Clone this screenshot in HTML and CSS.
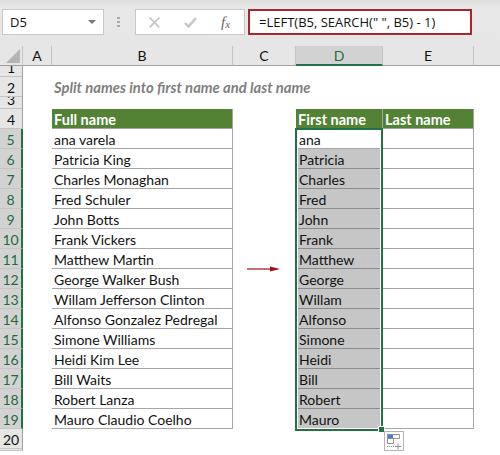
FILE: index.html
```html
<!DOCTYPE html>
<html lang="en">
<head>
    <meta charset="UTF-8">
    <title>Split names</title>
    <link rel="stylesheet" href="styles.css">
</head>
<body>
    <div class="formula-bar">
        <div class="name-box">
            <span>D5</span>
            <span class="name-arrow"></span>
        </div>
        <div class="grip"></div>
        <div class="fx-box">
            <svg class="fx-icon" width="11" height="11" viewBox="0 0 11 11"><path d="M.7.7l9.600 9.600M10.300.7L.7 10.300" stroke="#c6c6c6" stroke-width="1.800" fill="none"/></svg>
            <svg class="fx-icon" width="13" height="11" viewBox="0 0 13 11"><path d="M1 6l3.500 3.500L12 1" stroke="#c6c6c6" stroke-width="2.400" fill="none"/></svg>
            <span class="fx-text">f<sub>x</sub></span>
        </div>
        <div class="formula-input">=LEFT(B5, SEARCH(" ", B5) - 1)</div>
    </div>

    <div class="sheet">
        <div class="col-head corner"><svg width="14" height="14" viewBox="0 0 14 14"><path d="M14 0v14H0z" fill="#b4b4b4"/></svg></div>
        <div class="col-head">A</div>
        <div class="col-head">B</div>
        <div class="col-head">C</div>
        <div class="col-head active">D</div>
        <div class="col-head">E</div>
        <div class="col-head last"></div>

        <div class="row-head clip">1</div><div class="blank wide"></div>
        <div class="row-head">2</div><div class="blank"></div><div class="title">Split names into first name and last name</div>
        <div class="row-head clip">3</div><div class="blank wide"></div>

        <div class="row-head">4</div><div class="blank"></div>
        <div class="cell head">Full name</div><div class="blank"></div>
        <div class="cell head">First name</div><div class="cell head">Last name</div><div class="blank"></div>

        <div class="row-head sel">5</div><div class="blank"></div>
        <div class="cell">ana varela</div><div class="blank"></div>
        <div class="cell first">ana</div><div class="cell"></div><div class="blank"></div>

        <div class="row-head sel">6</div><div class="blank"></div>
        <div class="cell">Patricia King</div><div class="blank"></div>
        <div class="cell fill">Patricia</div><div class="cell"></div><div class="blank"></div>

        <div class="row-head sel">7</div><div class="blank"></div>
        <div class="cell">Charles Monaghan</div><div class="blank"></div>
        <div class="cell fill">Charles</div><div class="cell"></div><div class="blank"></div>

        <div class="row-head sel">8</div><div class="blank"></div>
        <div class="cell">Fred Schuler</div><div class="blank"></div>
        <div class="cell fill">Fred</div><div class="cell"></div><div class="blank"></div>

        <div class="row-head sel">9</div><div class="blank"></div>
        <div class="cell">John Botts</div><div class="blank"></div>
        <div class="cell fill">John</div><div class="cell"></div><div class="blank"></div>

        <div class="row-head sel">10</div><div class="blank"></div>
        <div class="cell">Frank Vickers</div><div class="blank"></div>
        <div class="cell fill">Frank</div><div class="cell"></div><div class="blank"></div>

        <div class="row-head sel">11</div><div class="blank"></div>
        <div class="cell">Matthew Martin</div><div class="blank"></div>
        <div class="cell fill">Matthew</div><div class="cell"></div><div class="blank"></div>

        <div class="row-head sel">12</div><div class="blank"></div>
        <div class="cell">George Walker Bush</div><div class="blank"></div>
        <div class="cell fill">George</div><div class="cell"></div><div class="blank"></div>

        <div class="row-head sel">13</div><div class="blank"></div>
        <div class="cell">Willam Jefferson Clinton</div><div class="blank"></div>
        <div class="cell fill">Willam</div><div class="cell"></div><div class="blank"></div>

        <div class="row-head sel">14</div><div class="blank"></div>
        <div class="cell">Alfonso Gonzalez Pedregal</div><div class="blank"></div>
        <div class="cell fill">Alfonso</div><div class="cell"></div><div class="blank"></div>

        <div class="row-head sel">15</div><div class="blank"></div>
        <div class="cell">Simone Williams</div><div class="blank"></div>
        <div class="cell fill">Simone</div><div class="cell"></div><div class="blank"></div>

        <div class="row-head sel">16</div><div class="blank"></div>
        <div class="cell">Heidi Kim Lee</div><div class="blank"></div>
        <div class="cell fill">Heidi</div><div class="cell"></div><div class="blank"></div>

        <div class="row-head sel">17</div><div class="blank"></div>
        <div class="cell">Bill Waits</div><div class="blank"></div>
        <div class="cell fill">Bill</div><div class="cell"></div><div class="blank"></div>

        <div class="row-head sel">18</div><div class="blank"></div>
        <div class="cell">Robert Lanza</div><div class="blank"></div>
        <div class="cell fill">Robert</div><div class="cell"></div><div class="blank"></div>

        <div class="row-head sel">19</div><div class="blank"></div>
        <div class="cell">Mauro Claudio Coelho</div><div class="blank"></div>
        <div class="cell fill">Mauro</div><div class="cell"></div><div class="blank"></div>

        <div class="row-head">20</div><div class="blank wide"></div>
        <div class="row-head"></div><div class="blank wide"></div>

        <div class="selection"><span class="handle"></span></div>
        <svg class="arrow" width="34" height="8" viewBox="0 0 34 8"><path d="M0 4h24" stroke="#a00f14" stroke-width="1.200"/><path d="M23 1.500l10 2.500-10 2.500z" fill="#a00f14"/></svg>
        <div class="paste-options">
            <svg width="16" height="16" viewBox="0 0 16 16">
                <rect x="0" y="0" width="6" height="4" fill="#3f7de8"/>
                <path d="M.5.5h12v4H.5zM.5 4.500h6v5H.5z" fill="none" stroke="#8f8f8f"/>
                <path d="M0 12.500h7" stroke="#8f8f8f" stroke-dasharray="1 1"/>
                <path d="M8 12.500h6M11 9.500v6" stroke="#8f8f8f"/>
            </svg>
        </div>
    </div>
</body>
</html>
```

FILE: styles.css
```css
body {
    margin: 0;
    width: 500px;
    height: 455px;
    overflow: hidden;
    background-color: white;
    font-family: 'Lato', 'Liberation Sans', sans-serif;
    font-size: 14px;
    color: #111;
}

.formula-bar {
    display: flex;
    align-items: center;
    height: 46px;
    padding: 0 0 2px 2px;
    box-sizing: border-box;
    background: linear-gradient(#dedede, #e8e8e8 8px, #e6e6e6);
}

.name-box {
    display: flex;
    justify-content: space-between;
    align-items: center;
    width: 102px;
    height: 26px;
    padding: 0 7px;
    box-sizing: border-box;
    background-color: white;
    border: 1px solid #c8c8c8;
    font-family: 'Open Sans', sans-serif;
    font-size: 13px;
}

.name-arrow {
    border-left: 4px solid transparent;
    border-right: 4px solid transparent;
    border-top: 4px solid #777;
}

.grip {
    width: 3px;
    height: 11px;
    margin: 0 15px 0 13px;
    background: repeating-linear-gradient(#aaa 0, #aaa 2px, transparent 2px, transparent 4px);
}

.fx-box {
    display: flex;
    align-items: center;
    gap: 24px;
    width: 110px;
    height: 26px;
    padding: 0 13px;
    box-sizing: border-box;
    background-color: white;
    border: 1px solid #c8c8c8;
}

.fx-text {
    font-family: 'Liberation Serif', serif;
    font-style: italic;
    font-size: 15px;
    color: #666;
}

.fx-text sub {
    font-size: 11px;
    vertical-align: -1px;
}

.formula-input {
    width: 224px;
    height: 26px;
    margin-left: 3px;
    padding-left: 9px;
    box-sizing: border-box;
    background-color: white;
    border: 2px solid #a8262c;
    line-height: 22px;
    font-family: 'Open Sans', sans-serif;
    font-size: 13px;
    white-space: nowrap;
}

.sheet {
    position: relative;
    display: grid;
    grid-template-columns: 23px 29px 181px 63px 87px 91px 1fr;
    grid-template-rows: 20px 11px 20px 12px repeat(17, 20px);
}

.col-head {
    display: flex;
    align-items: center;
    justify-content: center;
    background-color: #e6e6e6;
    border-right: 1px solid #c4c4c4;
    border-bottom: 1px solid #9f9f9f;
    height: 20px;
    box-sizing: border-box;
}

.col-head.corner {
    justify-content: flex-end;
    align-items: flex-end;
    padding: 0 2px 2px 0;
}

.col-head.active {
    background-color: #d2d2d2;
    border-bottom: 2px solid #217346;
    color: #1f6b41;
}

.col-head.last {
    border-right: none;
}

.row-head {
    display: flex;
    align-items: center;
    justify-content: center;
    grid-column: 1;
    padding-top: 1px;
    background-color: #e6e6e6;
    border-right: 1px solid #9f9f9f;
    border-bottom: 1px solid #c4c4c4;
    box-sizing: border-box;
    overflow: hidden;
}

/* short rows: digit is cut at the top of the row */
.row-head.clip {
    align-items: flex-end;
    padding: 0 0 5px;
    line-height: 6px;
}

.row-head.sel {
    background-color: #d2d2d2;
    border-right: 2px solid #217346;
    color: #1f6b41;
}

.blank.wide {
    grid-column: 2 / -1;
}

.title {
    grid-column: 3 / -1;
    align-self: center;
    padding-left: 2px;
    font-size: 14.800px;
    font-weight: bold;
    font-style: italic;
    color: #7f7f7f;
}

.cell {
    display: flex;
    align-items: center;
    padding: 1px 0 0 2px;
    border-right: 1px solid #a6a6a6;
    border-bottom: 1px solid #a6a6a6;
    box-sizing: border-box;
    white-space: nowrap;
}

.cell.head {
    background-color: #548235;
    color: white;
    font-size: 14.500px;
    font-weight: bold;
}

.cell.first,
.cell.fill {
    padding-left: 3px;
}

.cell.fill {
    background-color: #c6c6c6;
    border-right-color: #c6c6c6;
    border-bottom-color: #8c8c8c;
}

.selection {
    position: absolute;
    left: 295px;
    top: 82px;
    width: 88px;
    height: 303px;
    box-sizing: border-box;
    border: 2px solid #217346;
    box-shadow: inset 0 0 0 1px white;
}

.handle {
    position: absolute;
    right: -4px;
    bottom: -4px;
    width: 5px;
    height: 5px;
    background-color: #217346;
    border: 1px solid white;
}

.arrow {
    position: absolute;
    left: 247px;
    top: 219px;
}

.paste-options {
    position: absolute;
    left: 384px;
    top: 385px;
    width: 20px;
    height: 20px;
    padding: 2px;
    box-sizing: border-box;
    background-color: white;
    border: 1px solid #b4b4b4;
}
```
